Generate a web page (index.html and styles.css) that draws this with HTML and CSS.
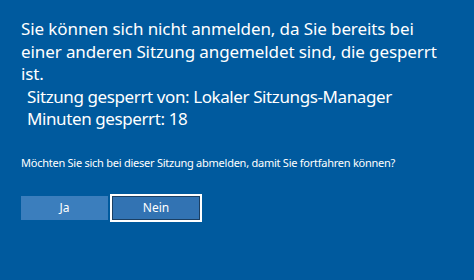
FILE: index.html
```html
<!DOCTYPE html>
<html lang="de">
<head>
<meta charset="utf-8">
<link rel="stylesheet" href="styles.css">
</head>
<body>
<div class="screen">
  <div class="message">
    <p class="lead">Sie können sich nicht anmelden, da Sie bereits bei einer anderen Sitzung angemeldet sind, die gesperrt ist.</p>
    <p class="detail">Sitzung gesperrt von: Lokaler Sitzungs-Manager</p>
    <p class="detail">Minuten gesperrt: 18</p>
  </div>
  <p class="question">Möchten Sie sich bei dieser Sitzung abmelden, damit Sie fortfahren können?</p>
  <div class="buttons">
    <button class="btn btn-yes">Ja</button>
    <button class="btn btn-no">Nein</button>
  </div>
</div>
</body>
</html>
```
FILE: styles.css
```css
html, body {
  margin: 0;
  padding: 0;
  background: #005a9e;
}
.screen {
  width: 474px;
  height: 280px;
  box-sizing: border-box;
  padding: 18px 21px 0 21px;
  font-family: "Noto Sans", "Open Sans", sans-serif;
  color: #ffffff;
}
.message {
  width: 425px;
}
.message p {
  margin: 0;
  font-size: 17px;
  line-height: 22.5px;
}
.lead {
  letter-spacing: -0.1px;
}
.detail {
  padding-left: 6px;
  letter-spacing: -0.4px;
}
.question {
  margin: 24px 0 0 0;
  font-size: 11px;
  line-height: 16px;
  letter-spacing: -0.25px;
}
.buttons {
  display: flex;
  align-items: center;
  gap: 2px;
  margin-top: 23px;
}
.btn {
  font-family: inherit;
  font-size: 12px;
  color: #ffffff;
  border: none;
  padding: 0;
  cursor: pointer;
}
.btn-yes {
  width: 87px;
  height: 24px;
  background: #3b7ebd;
}
.btn-no {
  width: 92px;
  height: 28px;
  box-sizing: border-box;
  background: #3273b3;
  border: 2px solid #ffffff;
  box-shadow: inset 0 0 0 1px #1b3f63;
}
```
